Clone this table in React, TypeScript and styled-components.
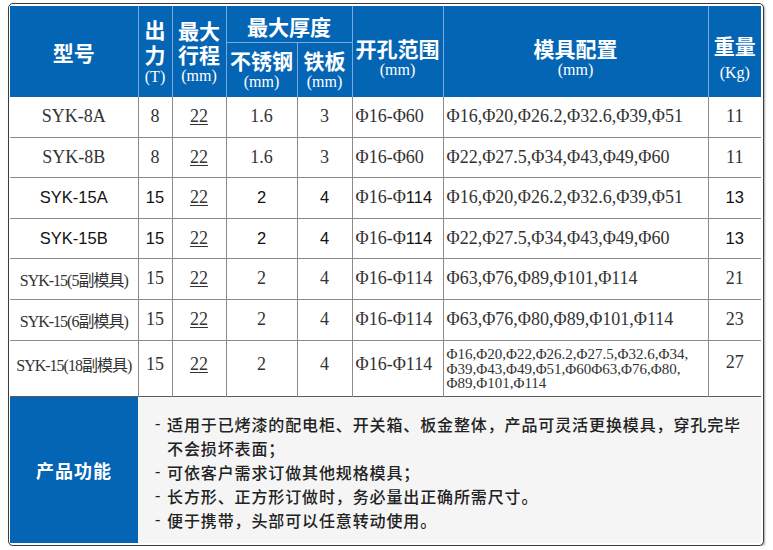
import React from 'react';
import styled, { createGlobalStyle } from 'styled-components';

const BLUE = '#0565b5';
const HEAD_LINE = '#78aade';
const GRID = '#8a8a8a';

const SERIF = `"Liberation Serif", "Noto Sans CJK SC", serif`;
const SANS = `"Liberation Sans", "Noto Sans CJK SC", sans-serif`;
const CJK = `"Noto Sans CJK SC", "Noto Sans", sans-serif`;

const GlobalStyle = createGlobalStyle`
  html, body { margin: 0; padding: 0; background: #fff; }
  body { font-family: ${SERIF}; }
`;

const Page = styled.div`
  padding: 3px 0 0 8px;
`;

const Card = styled.div`
  width: 756px;
  box-sizing: border-box;
  border: 1px solid #3c3c3c;
  border-radius: 5px;
  padding: 2px 2px 2px 1px;
  background: #fff;
  box-shadow: 1px 1px 2px rgba(0, 0, 0, 0.35);
`;

const Table = styled.table`
  width: 751px;
  table-layout: fixed;
  border-collapse: collapse;
  border-spacing: 0;
`;

const Col = styled.col<{ $w: number }>`
  width: ${(p) => p.$w}px;
`;

const HeadRow = styled.tr<{ $h: number }>`
  height: ${(p) => p.$h}px;
`;

const Th = styled.th<{ $first?: boolean; $underline?: boolean; $pt?: number }>`
  background: ${BLUE};
  color: #fff;
  padding: ${(p) => p.$pt ?? 0}px 0 0 0;
  vertical-align: middle;
  text-align: center;
  font-weight: 700;
  border-left: ${(p) => (p.$first ? 'none' : `1px solid ${HEAD_LINE}`)};
  border-bottom: ${(p) => (p.$underline ? `1px solid ${HEAD_LINE}` : 'none')};
`;

const HeadText = styled.span<{ $h?: number }>`
  display: block;
  font-family: ${CJK};
  font-size: 21px;
  line-height: ${(p) => p.$h ?? 26}px;
  font-weight: 700;
  white-space: nowrap;
`;

const Unit = styled.span<{ $mt?: number }>`
  display: block;
  font-family: ${SERIF};
  font-size: 16px;
  font-weight: 400;
  line-height: 20px;
  margin-top: ${(p) => p.$mt ?? 0}px;
`;

const BodyRow = styled.tr<{ $h: number }>`
  height: ${(p) => p.$h}px;
`;

const Td = styled.td<{
  $first?: boolean;
  $top?: boolean;
  $left?: boolean;
  $sans?: boolean;
  $pb?: number;
}>`
  padding: 0 0 ${(p) => p.$pb ?? 0}px ${(p) => (p.$left ? '3px' : '0')};
  text-align: ${(p) => (p.$left ? 'left' : 'center')};
  vertical-align: middle;
  border-left: ${(p) => (p.$first ? 'none' : `1px solid ${GRID}`)};
  border-top: ${(p) => (p.$top ? `1px solid ${GRID}` : 'none')};
  font-family: ${(p) => (p.$sans ? SANS : SERIF)};
  font-size: ${(p) => (p.$sans ? '16.5px' : '18px')};
  color: ${(p) => (p.$sans ? '#111' : '#333')};
  white-space: nowrap;
  overflow: hidden;
  background: #fff;
`;

const CjkModel = styled.span`
  font-size: 16px;
  letter-spacing: -1px;
`;

const Stroke = styled.span`
  text-decoration: underline;
  text-underline-offset: 2px;
  text-decoration-thickness: 1px;
`;

const SansPart = styled.span`
  font-family: ${SANS};
  font-size: 16.5px;
  color: #111;
`;

const SmallMolds = styled.div`
  font-size: 15px;
  line-height: 14.5px;
  white-space: normal;
  padding-top: 2px;
`;

const FeatureRow = styled.tr`
  height: 147px;
`;

const FeatureLabel = styled.td`
  background: ${BLUE};
  color: #fff;
  font-family: ${CJK};
  font-weight: 700;
  font-size: 18px;
  letter-spacing: 1px;
  text-align: center;
  vertical-align: middle;
  border-top: 1px solid #5a5a5a;
  padding: 0;
`;

const FeatureBody = styled.td`
  background: #f5f5f5;
  border-top: 1px solid #5a5a5a;
  vertical-align: top;
  padding: 15px 0 0 17px;
`;

const Item = styled.div`
  display: flex;
  font-family: ${CJK};
  font-size: 16px;
  font-weight: 500;
  letter-spacing: 0.88px;
  line-height: 24px;
  color: #222;
`;

const Dash = styled.span`
  flex: 0 0 12px;
  font-family: ${SERIF};
  font-size: 16px;
`;

const ItemText = styled.span`
  display: block;
  white-space: nowrap;
`;

type Row = {
  model: string;
  cjkModel?: boolean;
  force: string;
  ss: string;
  iron: string;
  rangeHead: string;
  rangeTail: string;
  molds: string | string[];
  weight: string;
  sans?: boolean;
  h: number;
};

const rows: Row[] = [
  { model: 'SYK-8A', force: '8', ss: '1.6', iron: '3', rangeHead: 'Φ16-Φ', rangeTail: '60', molds: 'Φ16,Φ20,Φ26.2,Φ32.6,Φ39,Φ51', weight: '11', h: 40 },
  { model: 'SYK-8B', force: '8', ss: '1.6', iron: '3', rangeHead: 'Φ16-Φ', rangeTail: '60', molds: 'Φ22,Φ27.5,Φ34,Φ43,Φ49,Φ60', weight: '11', h: 40 },
  { model: 'SYK-15A', force: '15', ss: '2', iron: '4', rangeHead: 'Φ16-Φ', rangeTail: '114', molds: 'Φ16,Φ20,Φ26.2,Φ32.6,Φ39,Φ51', weight: '13', sans: true, h: 41 },
  { model: 'SYK-15B', force: '15', ss: '2', iron: '4', rangeHead: 'Φ16-Φ', rangeTail: '114', molds: 'Φ22,Φ27.5,Φ34,Φ43,Φ49,Φ60', weight: '13', sans: true, h: 40 },
  { model: 'SYK-15(5副模具)', cjkModel: true, force: '15', ss: '2', iron: '4', rangeHead: 'Φ16-Φ', rangeTail: '114', molds: 'Φ63,Φ76,Φ89,Φ101,Φ114', weight: '21', h: 41 },
  { model: 'SYK-15(6副模具)', cjkModel: true, force: '15', ss: '2', iron: '4', rangeHead: 'Φ16-Φ', rangeTail: '114', molds: 'Φ63,Φ76,Φ80,Φ89,Φ101,Φ114', weight: '23', h: 41 },
  {
    model: 'SYK-15(18副模具)',
    cjkModel: true,
    force: '15',
    ss: '2',
    iron: '4',
    rangeHead: 'Φ16-Φ',
    rangeTail: '114',
    molds: ['Φ16,Φ20,Φ22,Φ26.2,Φ27.5,Φ32.6,Φ34,', 'Φ39,Φ43,Φ49,Φ51,Φ60Φ63,Φ76,Φ80,', 'Φ89,Φ101,Φ114'],
    weight: '27',
    h: 56,
  },
];

const widths = [128, 34, 54, 71, 55, 91, 265, 53];

const features: string[][] = [
  ['适用于已烤漆的配电柜、开关箱、板金整体，产品可灵活更换模具，穿孔完毕', '不会损坏表面；'],
  ['可依客户需求订做其他规格模具；'],
  ['长方形、正方形订做时，务必量出正确所需尺寸。'],
  ['便于携带，头部可以任意转动使用。'],
];

export default function App() {
  return (
    <>
      <GlobalStyle />
      <Page>
        <Card>
          <Table>
            <colgroup>
              {widths.map((w, i) => (
                <Col key={i} $w={w} />
              ))}
            </colgroup>
            <thead>
              <HeadRow $h={36}>
                <Th rowSpan={2} $first>
                  <HeadText>型号</HeadText>
                </Th>
                <Th rowSpan={2}>
                  <HeadText $h={25}>出</HeadText>
                  <HeadText $h={25}>力</HeadText>
                  <Unit>(T)</Unit>
                </Th>
                <Th rowSpan={2}>
                  <HeadText $h={24}>最大</HeadText>
                  <HeadText $h={24}>行程</HeadText>
                  <Unit>(mm)</Unit>
                </Th>
                <Th colSpan={2} $underline $pt={4}>
                  <HeadText>最大厚度</HeadText>
                </Th>
                <Th rowSpan={2} $pt={12}>
                  <HeadText $h={24}>开孔范围</HeadText>
                  <Unit>(mm)</Unit>
                </Th>
                <Th rowSpan={2} $pt={12}>
                  <HeadText $h={24}>模具配置</HeadText>
                  <Unit>(mm)</Unit>
                </Th>
                <Th rowSpan={2} $pt={12}>
                  <HeadText $h={24}>重量</HeadText>
                  <Unit $mt={6}>(Kg)</Unit>
                </Th>
              </HeadRow>
              <HeadRow $h={55}>
                <Th>
                  <HeadText $h={24}>不锈钢</HeadText>
                  <Unit>(mm)</Unit>
                </Th>
                <Th>
                  <HeadText $h={24}>铁板</HeadText>
                  <Unit>(mm)</Unit>
                </Th>
              </HeadRow>
            </thead>
            <tbody>
              {rows.map((r, i) => {
                const top = i > 0;
                const tall = Array.isArray(r.molds);
                const pb = tall ? 8 : 0;
                return (
                  <BodyRow key={r.model} $h={r.h}>
                    <Td $first $top={top} $sans={r.sans} $pb={pb}>
                      {r.cjkModel ? <CjkModel>{r.model}</CjkModel> : r.model}
                    </Td>
                    <Td $top={top} $sans={r.sans} $pb={pb}>{r.force}</Td>
                    <Td $top={top} $pb={pb}>
                      <Stroke>22</Stroke>
                    </Td>
                    <Td $top={top} $sans={r.sans} $pb={pb}>{r.ss}</Td>
                    <Td $top={top} $sans={r.sans} $pb={pb}>{r.iron}</Td>
                    <Td $top={top} $left $pb={pb}>
                      {r.rangeHead}
                      {r.sans ? <SansPart>{r.rangeTail}</SansPart> : r.rangeTail}
                    </Td>
                    <Td $top={top} $left>
                      {Array.isArray(r.molds) ? (
                        <SmallMolds>
                          {r.molds.map((m) => (
                            <div key={m}>{m}</div>
                          ))}
                        </SmallMolds>
                      ) : (
                        r.molds
                      )}
                    </Td>
                    <Td $top={top} $sans={r.sans} $pb={tall ? pb + 4 : 0}>{r.weight}</Td>
                  </BodyRow>
                );
              })}
              <FeatureRow>
                <FeatureLabel>产品功能</FeatureLabel>
                <FeatureBody colSpan={7}>
                  {features.map((lines) => (
                    <Item key={lines[0]}>
                      <Dash>-</Dash>
                      <div>
                        {lines.map((l) => (
                          <ItemText key={l}>{l}</ItemText>
                        ))}
                      </div>
                    </Item>
                  ))}
                </FeatureBody>
              </FeatureRow>
            </tbody>
          </Table>
        </Card>
      </Page>
    </>
  );
}
